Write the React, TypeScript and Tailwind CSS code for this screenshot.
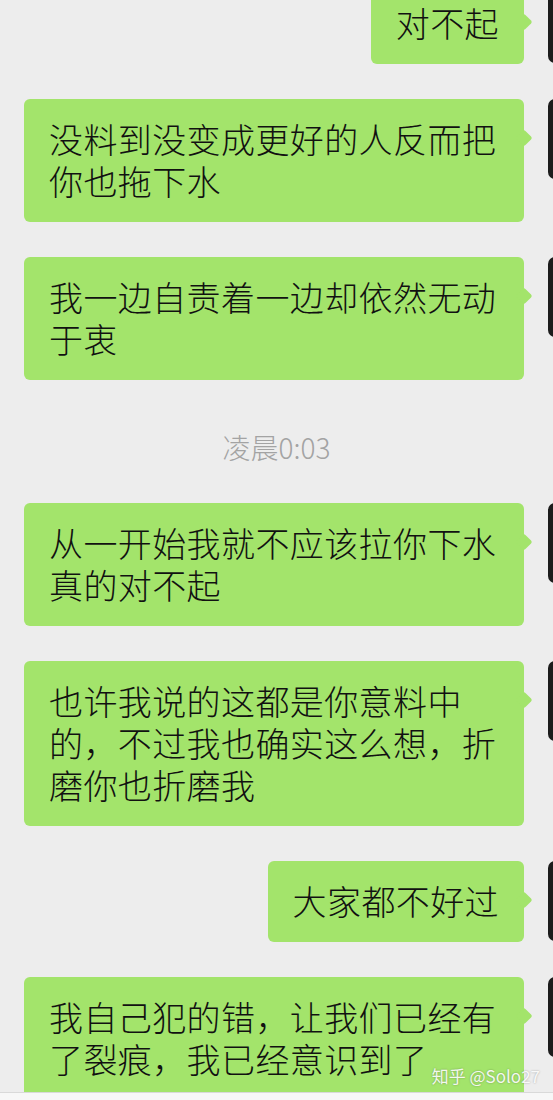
const messages: ({ kind: "me"; text: string } | { kind: "time"; text: string })[] = [
  { kind: "me", text: "对不起" },
  { kind: "me", text: "没料到没变成更好的人反而把你也拖下水" },
  { kind: "me", text: "我一边自责着一边却依然无动于衷" },
  { kind: "time", text: "凌晨0:03" },
  { kind: "me", text: "从一开始我就不应该拉你下水真的对不起" },
  { kind: "me", text: "也许我说的这都是你意料中的，不过我也确实这么想，折磨你也折磨我" },
  { kind: "me", text: "大家都不好过" },
  { kind: "me", text: "我自己犯的错，让我们已经有了裂痕，我已经意识到了" },
];

function Bubble({ text }: { text: string }) {
  return (
    <div className="flex items-start justify-end pl-6">
      <div className="relative max-w-[500px] rounded-[6px] bg-[#a3e46b] px-[25px] pt-[19px] pb-[20px] text-[34px] font-light leading-[42px] tracking-[0.4px] text-[#111]">
        {text}
        {/* tail */}
        <span className="absolute right-[-6px] top-[33px] h-[12px] w-[12px] rotate-45 rounded-[2px] bg-[#a3e46b]" />
      </div>
      <div className="ml-6 mr-[-75px] h-[80px] w-[80px] shrink-0 rounded-[7px] bg-[#1c1c1c]" />
    </div>
  );
}

export default function App() {
  return (
    <div
      className="relative h-[1100px] w-[553px] overflow-hidden bg-[#ededed]"
      style={{ fontFamily: '"Noto Sans CJK SC", "Noto Sans", sans-serif' }}
    >
      <div className="h-[1092px] overflow-hidden">
        <div className="-mt-[17px] flex flex-col gap-[35px]">
          {messages.map((m, i) =>
            m.kind === "time" ? (
              <div
                key={i}
                className="h-[53px] pt-[14px] text-center text-[28px] font-light leading-[36px] text-[#a3a3a3]"
              >
                {m.text}
              </div>
            ) : (
              <Bubble key={i} text={m.text} />
            )
          )}
        </div>
      </div>

      {/* input bar edge */}
      <div className="h-[8px] border-t border-[#d9d9d9] bg-[#f7f7f7]" />

      {/* watermark */}
      <div className="absolute bottom-[14px] right-[13px] text-[17px] leading-[20px] text-white/90 [text-shadow:0_0_2px_rgba(0,0,0,0.35)]">
        知乎 @Solo27
      </div>
    </div>
  );
}
